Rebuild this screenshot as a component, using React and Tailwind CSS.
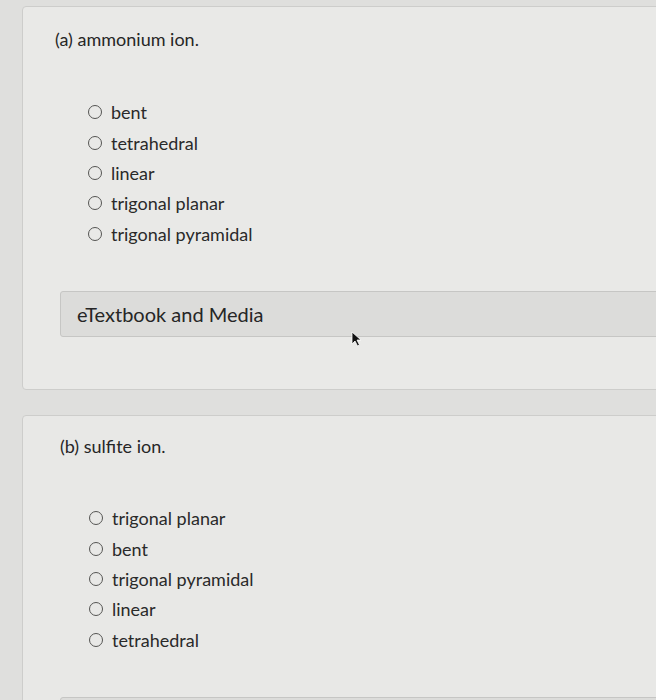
import React from "react";

const font = { fontFamily: "Lato, 'Open Sans', sans-serif" };

function Option({ label, circleLeft, gap }) {
  return (
    <div className="flex h-[30.4px] items-center">
      <span className={`inline-block h-[14px] w-[14px] shrink-0 rounded-full border-[1.8px] border-[#555553] ${circleLeft}`} />
      <span className={`text-[18px] leading-none text-[#2a2a2a] ${gap}`}>{label}</span>
    </div>
  );
}

export default function App() {
  const a = ["bent", "tetrahedral", "linear", "trigonal planar", "trigonal pyramidal"];
  const b = ["trigonal planar", "bent", "trigonal pyramidal", "linear", "tetrahedral"];
  return (
    <div
      className="relative h-[700px] w-[656px] overflow-hidden bg-[#dfdfdd] pt-[6px] pl-[22px]"
      style={font}
    >
      <div className="-mr-[20px] h-[384px] rounded-[4px] border border-[#cdcdcb] bg-[#e9e9e7] pt-[21px] pl-[32px]">
        <div className="text-[18px] leading-[22px] text-[#262626]">(a) ammonium ion.</div>
        <div className="mt-[47px]">
          {a.map((t) => (
            <Option key={t} label={t} circleLeft="ml-[33px]" gap="ml-[9px]" />
          ))}
        </div>
        <div className="mt-[42px] ml-[5px] flex h-[46px] items-center rounded-[3px] border border-[#c6c6c4] bg-[#dcdcda] pl-[16px]">
          <span className="text-[20px] text-[#262626]">eTextbook and Media</span>
        </div>
      </div>

      <div className="-mr-[20px] mt-[25px] h-[400px] rounded-[4px] border border-[#cdcdcb] bg-[#e8e8e6] pt-[19px] pl-[37px]">
        <div className="text-[18px] leading-[22px] text-[#262626]">(b) sulfite ion.</div>
        <div className="mt-[46px]">
          {b.map((t) => (
            <Option key={t} label={t} circleLeft="ml-[29px]" gap="ml-[9px]" />
          ))}
        </div>
        <div className="mt-[42px] h-[46px] rounded-[3px] border border-[#c6c6c4] bg-[#dcdcda]" />
      </div>

      <svg
        className="absolute left-[351px] top-[331px]"
        width="11"
        height="16"
        viewBox="0 0 11 16"
      >
        <path d="M1 1 L1 13 L4 10 L6.5 15 L8.5 14 L6 9 L10 9 Z" fill="#111" stroke="#fff" strokeWidth="0.8" />
      </svg>
    </div>
  );
}
